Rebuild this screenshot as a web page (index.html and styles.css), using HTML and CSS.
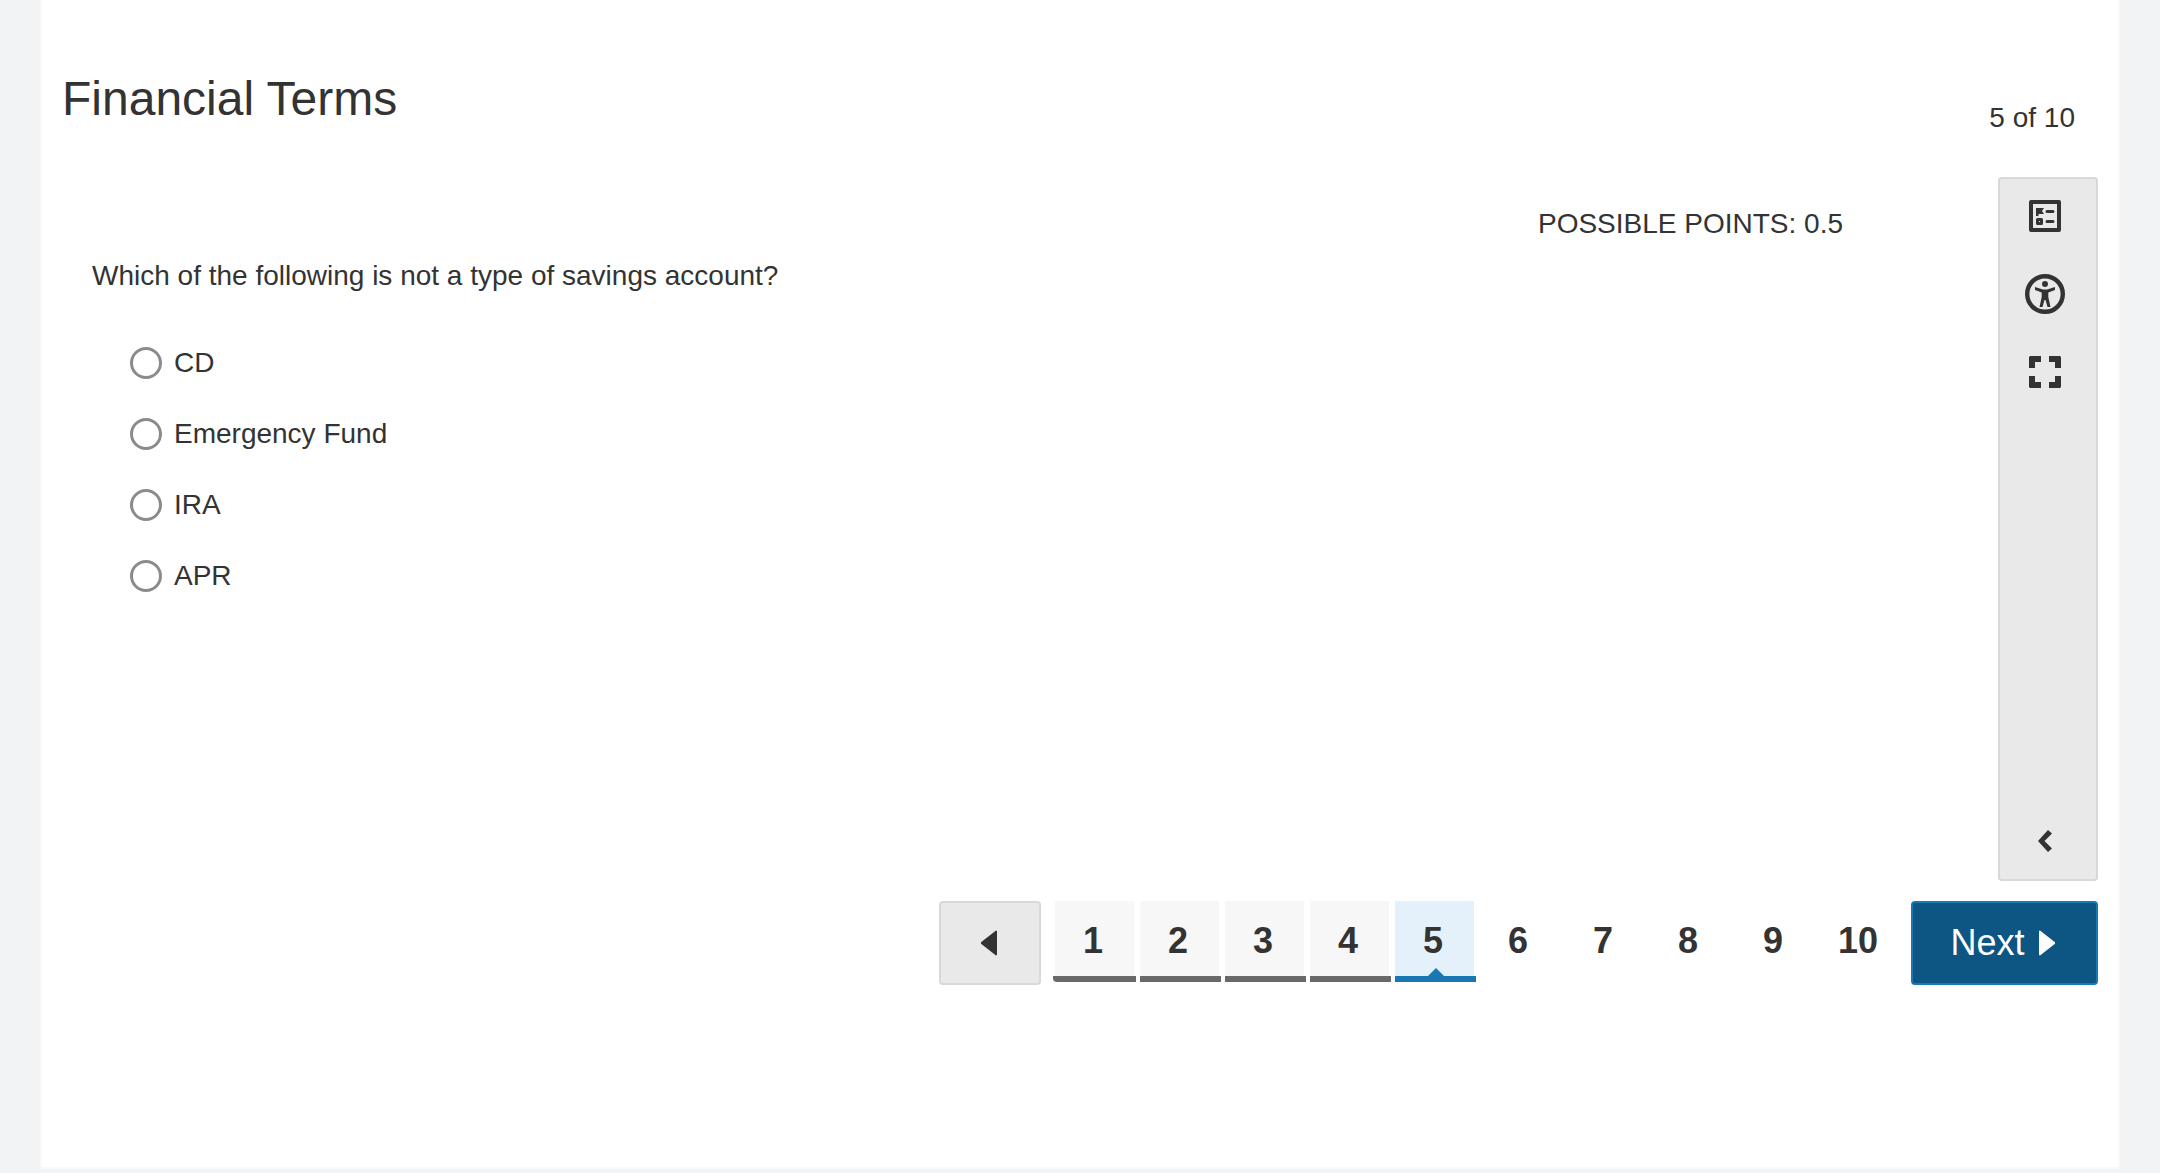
FILE: index.html
```html
<!DOCTYPE html>
<html lang="en">
<head>
<meta charset="utf-8">
<meta name="viewport" content="width=device-width, initial-scale=1">
<title>Financial Terms</title>
<link rel="stylesheet" href="styles.css">
</head>
<body>
<main class="panel">
  <header class="panel-header">
    <h1 class="title">Financial Terms</h1>
    <p class="progress">5 of 10</p>
  </header>

  <div class="workspace">
    <form class="question">
      <p class="points">POSSIBLE POINTS: 0.5</p>
      <fieldset class="choices">
        <legend class="prompt">Which of the following is not a type of savings account?</legend>
        <label class="choice"><input class="radio" type="radio" name="answer" value="cd">CD</label>
        <label class="choice"><input class="radio" type="radio" name="answer" value="fund">Emergency Fund</label>
        <label class="choice"><input class="radio" type="radio" name="answer" value="ira">IRA</label>
        <label class="choice"><input class="radio" type="radio" name="answer" value="apr">APR</label>
      </fieldset>
    </form>

    <aside class="tools">
      <button class="tool" type="button" aria-label="Review questions">
        <svg class="icon" viewBox="0 0 40 40" aria-hidden="true">
          <path d="M6 6H34V34H6Z" fill="none" stroke="currentColor" stroke-width="4" stroke-linejoin="round"/>
          <path d="M11 12H19L17 15L19 18H13.500V20H11Z"/>
          <path d="M22 15.500H28M22 25.500H28" fill="none" stroke="currentColor" stroke-width="3" stroke-linecap="round"/>
          <path d="M12.500 23.500H16.500V27.500H12.500Z" fill="none" stroke="currentColor" stroke-width="3" stroke-linejoin="round"/>
        </svg>
      </button>
      <button class="tool" type="button" aria-label="Accessibility">
        <svg class="icon" viewBox="0 0 40 40" aria-hidden="true">
          <circle cx="20" cy="20" r="17.800" fill="none" stroke="currentColor" stroke-width="4.400"/>
          <circle cx="20" cy="10" r="3"/>
          <path d="M10 13L18 15.500H22L30 13V16L23.300 18.600V23L25.500 33H22.500L20.500 26H19.500L17.500 33H14.500L16.700 23V18.600L10 16Z"/>
        </svg>
      </button>
      <button class="tool" type="button" aria-label="Full screen">
        <svg class="icon" viewBox="0 0 40 40" aria-hidden="true">
          <path d="M5 4H16V10H10V16H4V5ZM24 4H35L36 5V16H30V10H24ZM4 24H10V30H16V36H5L4 35ZM30 24H36V35L35 36H24V30H30Z"/>
        </svg>
      </button>
      <button class="tool tool-expand" type="button" aria-label="Expand tools">
        <svg class="icon" viewBox="0 0 40 40" aria-hidden="true">
          <path d="M23 9L27 12.500L19.500 20L27 27.500L23 31L13 20Z"/>
        </svg>
      </button>
    </aside>
  </div>

  <nav class="pager" aria-label="Questions">
    <button class="step step-back" type="button" aria-label="Previous">
      <svg class="arrow" viewBox="0 0 16 26" aria-hidden="true"><path d="M15 .500L16 1V25L15 25.500L0 13.700V12.300Z"/></svg>
    </button>
    <ol class="pages">
      <li class="page visited"><a class="page-link" href="#1">1</a></li>
      <li class="page visited"><a class="page-link" href="#2">2</a></li>
      <li class="page visited"><a class="page-link" href="#3">3</a></li>
      <li class="page visited"><a class="page-link" href="#4">4</a></li>
      <li class="page current"><a class="page-link" href="#5" aria-current="page">5</a></li>
      <li class="page"><a class="page-link" href="#6">6</a></li>
      <li class="page"><a class="page-link" href="#7">7</a></li>
      <li class="page"><a class="page-link" href="#8">8</a></li>
      <li class="page"><a class="page-link" href="#9">9</a></li>
      <li class="page"><a class="page-link" href="#10">10</a></li>
    </ol>
    <button class="step step-next" type="button">Next
      <svg class="arrow" viewBox="0 0 16 26" aria-hidden="true"><path d="M1 .500L0 1V25L1 25.500L16 13.700V12.300Z"/></svg>
    </button>
  </nav>
</main>
</body>
</html>
```
FILE: styles.css
```css
*, *::before, *::after {
  box-sizing: border-box;
}

body {
  margin: 0;
  padding: 0 40px 4px;
  background: #f1f3f5;
  color: #333;
  font: 28px/32px "Helvetica Neue", "Liberation Sans", Arial, sans-serif;
}

h1, p, ol, fieldset {
  margin: 0;
  padding: 0;
}

button {
  font: inherit;
  color: inherit;
  cursor: pointer;
}

svg {
  display: block;
  fill: currentColor;
}

.panel {
  min-height: calc(100vh - 4px);
  padding: 71px 20px 0;
  background: #fff;
  border: solid #faf9f8;
  border-width: 0 2px 2px;
}

.panel-header {
  display: flex;
  justify-content: space-between;
  align-items: flex-start;
  padding-bottom: 43px;
}

.title {
  font-size: 48px;
  line-height: 56px;
  font-weight: 400;
}

.progress {
  padding: 31px 23px 0 0;
}

.workspace {
  display: grid;
  grid-template-columns: 1fr 100px;
  min-height: 704px;
}

.question {
  padding: 31px 30px 30px;
}

.points {
  padding-right: 125px;
  text-align: right;
}

.choices {
  display: grid;
  gap: 39px;
  margin-top: 20px;
  border: 0;
}

.prompt {
  padding: 0 0 55px;
}

.choice {
  display: flex;
  align-items: center;
  justify-self: start;
  gap: 12px;
  margin-left: 38px;
}

.radio {
  appearance: none;
  width: 32px;
  height: 32px;
  margin: 0;
  border: 3px solid #8b8a8e;
  border-radius: 50%;
  background: #fff;
}

.radio:checked {
  background: radial-gradient(#0d5583 8px, #fff 9px);
}

.tools {
  display: flex;
  flex-direction: column;
  align-items: center;
  gap: 38px;
  padding: 17px 6px 18px 0;
  background: #e9e9e9;
  border: 2px solid #d8d8d8;
  border-radius: 4px;
}

.tool {
  padding: 0;
  border: 0;
  background: none;
}

.tool-expand {
  margin-top: auto;
}

.icon {
  width: 40px;
  height: 40px;
}

.pager {
  display: flex;
  justify-content: flex-end;
  padding: 20px 0;
}

.step {
  display: flex;
  align-items: center;
  justify-content: center;
  height: 84px;
  border: 2px solid;
  border-radius: 4px;
  font-size: 36px;
  line-height: 40px;
}

.step-back {
  width: 102px;
  margin-right: 12px;
  padding: 0 2px 0 0;
  background: #e9e9e9;
  border-color: #d8d8d8;
}

.step-next {
  gap: 14px;
  width: 187px;
  margin-left: 10px;
  padding: 0 4px 0 0;
  background: #0d5583;
  border-color: #1977b3;
  color: #fff;
}

.arrow {
  width: 16px;
  height: 26px;
}

.pages {
  display: flex;
  gap: 4px;
  list-style: none;
}

.page {
  position: relative;
  height: 81px;
  border: solid transparent;
  border-width: 0 2px 6px 0;
}

.page:first-child {
  border-left-width: 2px;
  border-bottom-left-radius: 4px;
}

.page-link {
  display: block;
  width: 79px;
  height: 75px;
  padding: 20px 3px 0 0;
  font-size: 36px;
  line-height: 40px;
  font-weight: 700;
  text-align: center;
  text-decoration: none;
  color: inherit;
}

.visited .page-link {
  background: #f7f7f7;
}

.current .page-link {
  background: #e4f1fb;
}

/* Status bar under a page tile, running past the tile's edges */
.visited::after,
.current::after {
  content: "";
  position: absolute;
  inset: 100% -2px auto 0;
  height: 6px;
  background: #696969;
}

.visited:first-child::after {
  left: -2px;
  border-bottom-left-radius: 4px;
}

.current::after {
  background: #1977b3;
}

.current::before {
  content: "";
  position: absolute;
  left: 33px;
  bottom: 0;
  border: solid transparent;
  border-width: 0 8px 8px;
  border-bottom-color: #1977b3;
}
```
